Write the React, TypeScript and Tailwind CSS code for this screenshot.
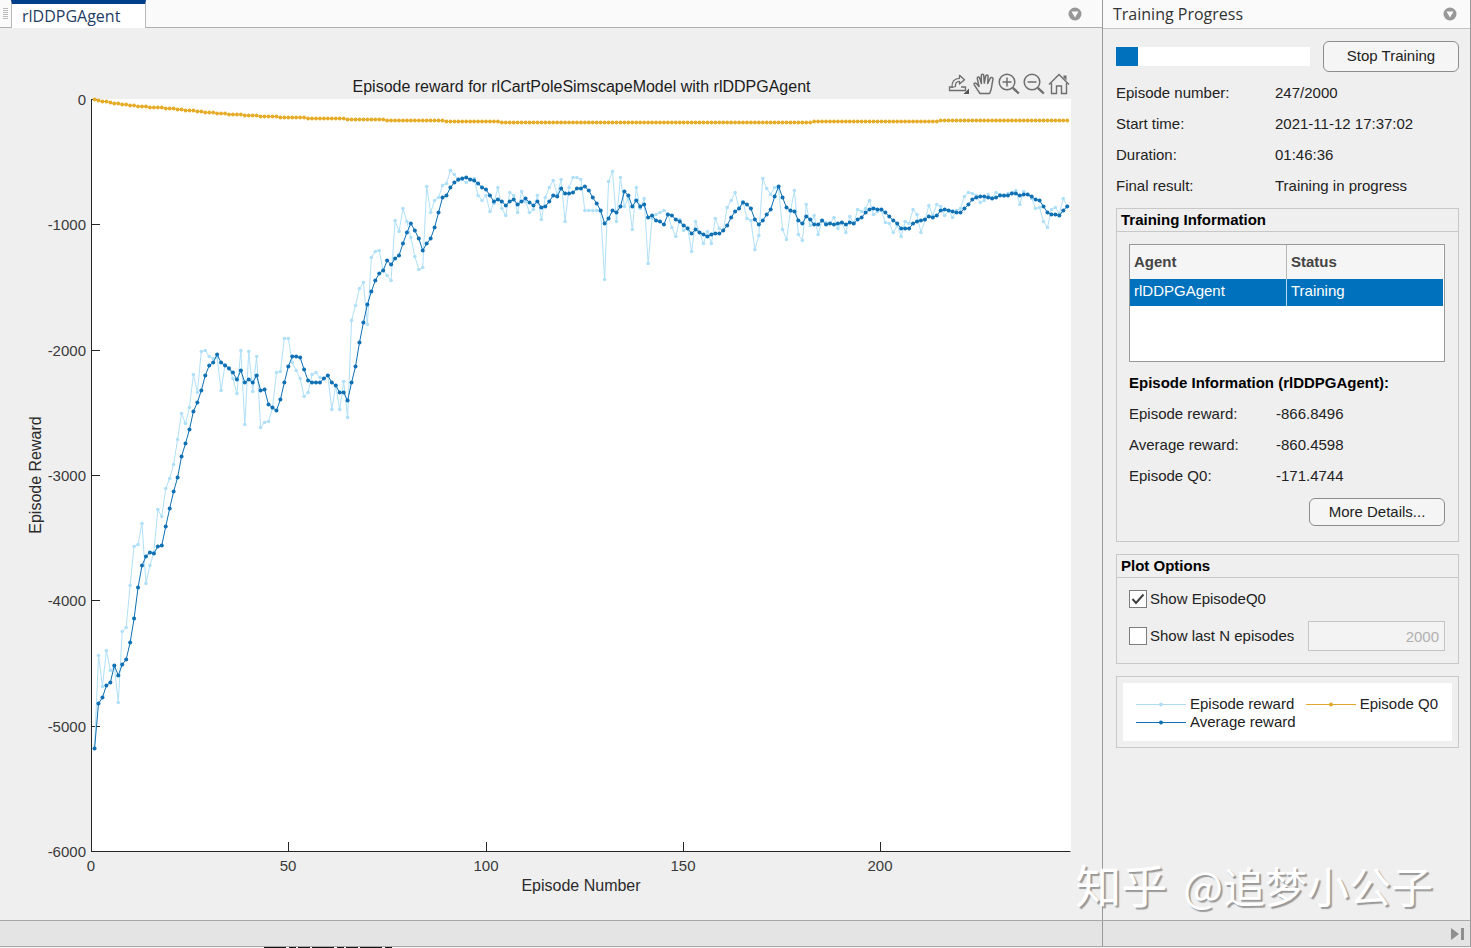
import { useState, type ReactNode } from "react";

const EPISODES = 247;
const X_START = 90.6;
const X_STEP = 3.954;

// Heights on the plot canvas, one entry per episode
const averageReward = [
  748, 703, 697, 685, 682, 665, 675, 664, 659, 642, 618, 587, 565, 556, 552, 553, 546, 545, 526, 508,
  491, 477, 456, 443, 429, 411, 402, 390, 375, 365, 362, 354, 362, 365, 368, 372, 379, 370, 382, 379,
  382, 375, 390, 389, 404, 407, 410, 399, 382, 366, 356, 356, 357, 369, 380, 382, 382, 382, 378, 375,
  382, 385, 392, 392, 400, 382, 366, 342, 322, 304, 291, 280, 273, 270, 260, 264, 258, 255, 243, 232,
  223, 230, 238, 250, 243, 238, 227, 212, 197, 195, 187, 182, 179, 178, 177, 179, 180, 183, 187, 189,
  195, 201, 199, 201, 205, 201, 199, 204, 201, 198, 202, 205, 201, 207, 206, 201, 195, 196, 188, 193,
  193, 192, 188, 188, 186, 190, 197, 203, 210, 223, 218, 210, 212, 206, 191, 195, 206, 200, 206, 204,
  217, 215, 220, 221, 224, 214, 215, 219, 221, 225, 228, 233, 229, 232, 234, 236, 234, 233, 233, 230,
  225, 217, 211, 208, 202, 204, 208, 219, 224, 220, 214, 209, 196, 186, 197, 207, 210, 211, 220, 223,
  216, 219, 224, 224, 220, 224, 223, 224, 223, 222, 224, 222, 223, 219, 217, 212, 209, 208, 209, 209,
  212, 216, 220, 223, 228, 228, 228, 223, 221, 220, 219, 216, 217, 215, 210, 209, 210, 211, 212, 212,
  208, 204, 199, 197, 196, 196, 197, 198, 197, 195, 195, 195, 193, 193, 195, 194, 194, 196, 199, 200,
  206, 212, 214, 214, 215, 210, 206,
];

const episodeReward = [
  748, 655, 686, 650, 670, 666, 702, 631, 627, 585, 546, 544, 523, 583, 565, 552, 509, 516, 488, 478,
  464, 439, 413, 423, 407, 374, 392, 351, 350, 356, 358, 357, 390, 364, 367, 378, 393, 350, 424, 351,
  391, 356, 427, 422, 421, 408, 372, 371, 338, 338, 362, 370, 378, 396, 392, 374, 372, 377, 378, 375,
  409, 385, 409, 381, 417, 320, 305, 288, 282, 324, 257, 251, 250, 270, 275, 280, 220, 231, 208, 221,
  237, 256, 269, 267, 186, 212, 200, 197, 185, 183, 170, 174, 180, 179, 182, 179, 178, 195, 200, 195,
  211, 203, 187, 208, 215, 192, 195, 212, 191, 201, 212, 209, 195, 219, 197, 187, 180, 194, 179, 221,
  187, 177, 177, 179, 210, 210, 210, 210, 211, 279, 181, 171, 221, 177, 206, 198, 229, 187, 208, 198,
  263, 218, 214, 212, 210, 214, 227, 236, 219, 230, 227, 251, 221, 232, 243, 231, 243, 218, 228, 230,
  207, 200, 192, 208, 201, 218, 220, 249, 235, 178, 188, 194, 187, 188, 229, 239, 211, 190, 234, 240,
  204, 225, 215, 234, 220, 222, 223, 217, 228, 222, 232, 216, 223, 209, 211, 208, 200, 214, 211, 210,
  222, 223, 232, 225, 236, 221, 223, 209, 214, 232, 220, 205, 215, 204, 206, 215, 210, 217, 210, 208,
  196, 192, 193, 195, 202, 200, 194, 197, 192, 194, 196, 193, 192, 190, 204, 191, 194, 198, 208, 207,
  221, 227, 209, 207, 213, 198, 206,
];

// Q0 changes slowly, so only its turning points are kept: [episode, height]
const q0Knots = [
  [1, 99], [5, 102], [10, 105], [20, 108], [30, 112], [40, 115], [50, 117], [60, 118],
  [80, 120], [100, 121], [108, 122], [180, 122], [184, 121], [211, 121], [217, 120], [247, 120],
];

const episodeQ0 = Array.from({ length: EPISODES }, (_, i) => {
  const n = i + 1;
  const k = Math.max(1, q0Knots.findIndex(([e]) => e >= n));
  const [e0, y0] = q0Knots[k - 1];
  const [e1, y1] = q0Knots[k];
  return Math.round(y0 + ((n - e0) / (e1 - e0)) * (y1 - y0));
});

const yTicks = [
  { label: "0", y: 99 },
  { label: "-1000", y: 224 },
  { label: "-2000", y: 350 },
  { label: "-3000", y: 475 },
  { label: "-4000", y: 600 },
  { label: "-5000", y: 726 },
  { label: "-6000", y: 851 },
];

const xTicks = [
  { label: "0", x: 91 },
  { label: "50", x: 288 },
  { label: "100", x: 486 },
  { label: "150", x: 683 },
  { label: "200", x: 880 },
];

function Series({ data, color, r }: { data: number[]; color: string; r: number }) {
  const pts = data.map((y, i) => [X_START + X_STEP * (i + 1), y + 0.5]);
  return (
    <g fill={color}>
      <polyline points={pts.map((p) => p.join(",")).join(" ")} fill="none" stroke={color} strokeWidth={1} />
      {pts.map(([x, y], i) => (
        <circle key={i} cx={x} cy={y} r={r} />
      ))}
    </g>
  );
}

function RewardPlot({ showQ0 }: { showQ0: boolean }) {
  return (
    <svg viewBox="0 90 1102 830" className="block h-auto w-full" role="img" aria-label="Episode reward plot">
      <rect x="91" y="99" width="980" height="753" fill="#fff" />
      <g stroke="#262626" strokeWidth="1">
        <path d="M91.5 99V851.5H1070.5" fill="none" />
        {yTicks.map((t) => (
          <path key={t.label} d={`M91 ${t.y + 0.5}h9`} />
        ))}
        {xTicks.map((t) => (
          <path key={t.label} d={`M${t.x + 0.5} 851v-9`} />
        ))}
      </g>
      <Series data={episodeReward} color="#b0e0f8" r={1.8} />
      <Series data={averageReward} color="#0f70b3" r={2} />
      {showQ0 && <Series data={episodeQ0} color="#e6ac28" r={1.9} />}
      <g fill="#3a3a3a" fontSize="15">
        {yTicks.map((t) => (
          <text key={t.label} x="86" y={t.y + 6} textAnchor="end">{t.label}</text>
        ))}
        {xTicks.map((t) => (
          <text key={t.label} x={t.x} y="871" textAnchor="middle">{t.label}</text>
        ))}
      </g>
      <g fill="#2b2b2b" fontSize="16" textAnchor="middle">
        <text x="581" y="891">Episode Number</text>
        <text transform="translate(41 475) rotate(-90)">Episode Reward</text>
      </g>
    </svg>
  );
}

function ToolButton({ label, children }: { label: string; children: ReactNode }) {
  return (
    <button type="button" aria-label={label} className="h-6 w-[25px]">
      <svg viewBox="0 0 24 24" className="h-6 w-6" fill="none" stroke="#6e6e6e" strokeWidth="1.5">
        {children}
      </svg>
    </button>
  );
}

function PlotToolbar() {
  return (
    <div className="flex justify-end">
      <ToolButton label="Export">
        <path d="M5.500 15H2.500v3.500h16V15h-4.500" strokeWidth="1.3" />
        <path d="M5 15.500C4.500 9.500 7.500 6.300 12.500 6.300V3.300L17.500 7.800 12.500 12V9.300C9.500 9.300 8 11 8.500 14.500z" strokeWidth="1.300" strokeLinejoin="round" />
        <path d="M22 16.500v5.500H16.500z" fill="#555" stroke="none" />
      </ToolButton>
      <ToolButton label="Pan">
        <path
          d="M8 21.500C6 18.500 4 15.500 2.300 12.800c-.8-1.500.8-2.400 2-1.300L7 14.500 5.300 6.600c-.3-1.800 1.900-2.200 2.400-.6l1.700 5.500L9.300 3.600c0-1.800 2.400-1.800 2.500 0l.5 7.500 1.400-7c.4-1.700 2.600-1.300 2.400.4l-.4 7 2.500-5.200c.7-1.500 3.200-.8 2.800.8-.8 4-1.100 6.500-1.600 9-.4 2-.9 3.500-1.800 5.400z"
          strokeLinejoin="round"
        />
      </ToolButton>
      <ToolButton label="Zoom in">
        <circle cx="10" cy="10" r="7.800" />
        <path d="M5.500 10h9M10 5.500v9" />
        <path d="M15.800 15.800L21.800 21.500" strokeWidth="2.400" />
      </ToolButton>
      <ToolButton label="Zoom out">
        <circle cx="10" cy="10" r="7.800" />
        <path d="M5.500 10h9" />
        <path d="M15.800 15.800L21.800 21.500" strokeWidth="2.400" />
      </ToolButton>
      <ToolButton label="Restore view">
        <path d="M2 12.500L12 2.500l10 10M4.500 11v10.500h5V14h5v7.500h5V11" strokeWidth="1.400" />
        <path d="M16.500 3.500h3v5l-3-3z" fill="#6e6e6e" stroke="none" />
      </ToolButton>
    </div>
  );
}

function PanelMenu({ label }: { label: string }) {
  return (
    <button type="button" aria-label={label} className="h-[14px] w-[14px]">
      <svg viewBox="0 0 14 14" className="h-full w-full">
        <circle cx="7" cy="7" r="6.500" fill="#989898" />
        <path d="M3.500 4.500h7L7 10.500z" fill="#fff" />
      </svg>
    </button>
  );
}

function InfoRows({ rows, columns }: { rows: [string, string][]; columns: string }) {
  return (
    <dl>
      {rows.map(([name, value]) => (
        <div key={name} className={`grid h-[31px] items-center ${columns}`}>
          <dt>{name}</dt>
          <dd>{value}</dd>
        </div>
      ))}
    </dl>
  );
}

function GroupBox({ title, children }: { title: string; children: ReactNode }) {
  return (
    <section className="border border-[#c8c8c8]">
      <h2 className="h-[23px] border-b border-[#c8c8c8] px-1 leading-[22px] font-bold text-black">{title}</h2>
      {children}
    </section>
  );
}

function CheckBox({ label, checked, onChange }: { label: string; checked: boolean; onChange: (v: boolean) => void }) {
  return (
    <label className="flex h-[18px] items-center gap-[3px]">
      <span className="grid h-[18px] w-[18px]">
        <input
          type="checkbox"
          checked={checked}
          onChange={(e) => onChange(e.target.checked)}
          className="col-start-1 row-start-1 appearance-none border border-[#7d7d7d] bg-white"
        />
        {checked && (
          <svg viewBox="0 0 18 18" className="pointer-events-none col-start-1 row-start-1">
            <path d="M3.500 9l3.500 4 7.500-8.500" fill="none" stroke="#404040" strokeWidth="2" />
          </svg>
        )}
      </span>
      {label}
    </label>
  );
}

function LegendItem({ label, color }: { label: string; color: string }) {
  return (
    <li className="flex h-[18px] items-center gap-1">
      <svg viewBox="0 0 50 5" className="h-[5px] w-[50px]">
        <path d="M0 2.500h50" stroke={color} />
        <circle cx="25" cy="2.500" r="2" fill={color} />
      </svg>
      {label}
    </li>
  );
}

export default function App() {
  const [showQ0, setShowQ0] = useState(true);
  const [lastN, setLastN] = useState(false);

  return (
    <div className="relative flex min-h-screen flex-col bg-[#efefef] font-['Liberation_Sans',Arial,sans-serif] text-[15px] text-[#222]">
      <div className="flex flex-1">
        <main className="min-w-0 flex-1">
          <header className="flex h-7 items-center border-b border-[#b0b0b0] bg-[#fafafa] pr-5 font-['Open_Sans',sans-serif] text-base">
            <div className="flex w-[11px] justify-center">
              <svg viewBox="0 0 5 12" className="h-3 w-[5px]" stroke="#bbb">
                <path d="M0 .5h5M0 2.500h5M0 4.500h5M0 6.500h5M0 8.500h5M0 10.500h5" />
              </svg>
            </div>
            <a
              href="#agent"
              className="flex h-7 w-[135px] items-center border-x border-t-4 border-x-[#b8b8b8] border-t-[#00408a] bg-white pl-[10px] text-[#1f3d63]"
            >
              rlDDPGAgent
            </a>
            <div className="ml-auto flex items-center">
              <PanelMenu label="Document menu" />
            </div>
          </header>

          <div className="pt-11">
            <div className="grid h-[18px] grid-cols-[1fr_auto_1fr] pr-[30px] pl-[91px]">
              <span />
              <h1 className="pt-[3px] text-base leading-6 text-[#1c1c1c]">
                Episode reward for rlCartPoleSimscapeModel with rlDDPGAgent
              </h1>
              <PlotToolbar />
            </div>
            <RewardPlot showQ0={showQ0} />
          </div>
        </main>

        <aside className="w-[369px] border-x border-[#999]">
          <header className="flex h-[29px] items-center justify-between border-b border-[#c4c4c4] bg-[#fafafa] pr-[13px] pl-[10px] font-['Open_Sans',sans-serif] text-base text-[#333]">
            <span>Training Progress</span>
            <PanelMenu label="Panel menu" />
          </header>

          <div className="pt-3 pr-[11px] pl-[13px]">
            <div className="mb-[6px] flex items-center gap-[13px]">
              <div role="progressbar" aria-label="Training" aria-valuenow={EPISODES} aria-valuemax={2000} className="h-[19px] flex-1 bg-white">
                <div className="h-full w-[22px] bg-[#0072bd]" />
              </div>
              <button type="button" className="h-[31px] w-[136px] rounded-md border border-[#8c8c8c] bg-[#f5f5f5]">
                Stop Training
              </button>
            </div>

            <InfoRows
              columns="grid-cols-[159px_1fr]"
              rows={[
                ["Episode number:", `${EPISODES}/2000`],
                ["Start time:", "2021-11-12 17:37:02"],
                ["Duration:", "01:46:36"],
                ["Final result:", "Training in progress"],
              ]}
            />

            <div className="mt-[6px] flex flex-col gap-3">
              <GroupBox title="Training Information">
                <div className="pt-3 pr-[13px] pb-[15px] pl-3">
                  <div className="h-[118px] border border-[#999] bg-white pr-px">
                    <table className="w-full table-fixed border-collapse text-left">
                      <thead>
                        <tr className="h-[34px] bg-[#f5f5f5] text-[#444]">
                          <th className="border-r border-[#b8b8b8] pl-1">Agent</th>
                          <th className="pl-1">Status</th>
                        </tr>
                      </thead>
                      <tbody>
                        <tr className="h-[27px] bg-[#0072bd] text-white">
                          <td className="border-r border-[#b8d8ee] pb-[2px] pl-1">rlDDPGAgent</td>
                          <td className="pb-[2px] pl-1">Training</td>
                        </tr>
                      </tbody>
                    </table>
                  </div>
                  <h3 className="mt-[6px] h-[31px] leading-[30px] font-bold text-black">Episode Information (rlDDPGAgent):</h3>
                  <InfoRows
                    columns="grid-cols-[147px_1fr]"
                    rows={[
                      ["Episode reward:", "-866.8496"],
                      ["Average reward:", "-860.4598"],
                      ["Episode Q0:", "-171.4744"],
                    ]}
                  />
                  <div className="mt-[6px] flex justify-end">
                    <button type="button" className="h-7 w-[136px] rounded-md border border-[#8c8c8c] bg-[#f5f5f5]">
                      More Details...
                    </button>
                  </div>
                </div>
              </GroupBox>

              <GroupBox title="Plot Options">
                <div className="flex flex-col gap-[13px] py-3 pr-[13px] pl-3">
                  <CheckBox label="Show EpisodeQ0" checked={showQ0} onChange={setShowQ0} />
                  <div className="flex items-center justify-between">
                    <CheckBox label="Show last N episodes" checked={lastN} onChange={setLastN} />
                    <input
                      type="text"
                      aria-label="Number of episodes"
                      defaultValue="2000"
                      disabled={!lastN}
                      className="h-[30px] w-[137px] border border-[#c4c4c4] bg-[#f3f3f3] px-[5px] text-right text-[#b0b0b0]"
                    />
                  </div>
                </div>
              </GroupBox>

              <div className="border border-[#c8c8c8] p-[6px]">
                <ul className="grid grid-cols-[auto_auto] justify-start gap-x-[10px] bg-white pt-3 pb-[10px] pl-[13px]">
                  <LegendItem label="Episode reward" color="#b0dcf2" />
                  <LegendItem label="Episode Q0" color="#e0a92c" />
                  <LegendItem label="Average reward" color="#0f70b3" />
                </ul>
              </div>
            </div>
          </div>
        </aside>
      </div>

      <footer className="flex h-[27px] items-center border-y border-[#a8a8a8] bg-[#e4e4e4]">
        <div className="flex-1" />
        <div className="flex h-full w-[369px] items-center justify-end border-x border-[#999] pr-[5px]">
          <button type="button" aria-label="Collapse panel">
            <svg viewBox="0 0 14 14" className="h-[14px] w-[14px]" fill="#8f8f8f">
              <path d="M0 1l8 6-8 6zM10 1h3v12h-3z" />
            </svg>
          </button>
        </div>
      </footer>
      <div className="h-px bg-[#f4f4f4]">
        <svg viewBox="0 0 400 1" className="h-px w-[400px]">
          <path d="M264 .5h129" stroke="#111" strokeDasharray="22 3 7 2 12 2" />
        </svg>
      </div>

      <p className="pointer-events-none absolute right-[38px] bottom-[33px] flex items-baseline gap-4 font-['Noto_Sans_CJK_SC',sans-serif] text-[42px] leading-[60px] text-white [text-shadow:2px_2px_1px_#999]">
        <span className="text-[46px]">知乎</span>
        <span>@追梦小公子</span>
      </p>
    </div>
  );
}
